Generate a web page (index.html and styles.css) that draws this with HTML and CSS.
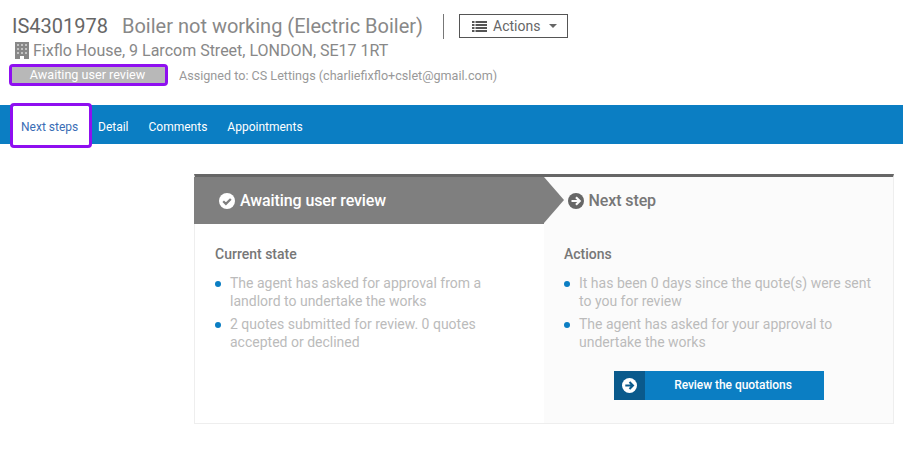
FILE: index.html
```html
<!DOCTYPE html>
<html lang="en">
<head>
    <meta charset="UTF-8">
    <title>IS4301978 Boiler not working</title>
    <link rel="stylesheet" href="styles.css">
</head>
<body>
    <div class="header">
        <div class="title-row">
            <span class="ref">IS4301978</span>
            <span class="job">Boiler not working (Electric Boiler)</span>
            <span class="divider"></span>
            <button class="actions-btn">
                <svg class="list-icon" width="15" height="12" viewBox="0 0 15 12"><path d="M0 1h2.500v2h-2.500zM3.500 1h11.500v2h-11.500zM0 4h2.500v2h-2.500zM3.500 4h11.500v2h-11.500zM0 7h2.500v2h-2.500zM3.500 7h11.500v2h-11.500zM0 10h2.500v2h-2.500zM3.500 10h11.500v2h-11.500z" fill="#555"/></svg>
                Actions
                <span class="caret"></span>
            </button>
        </div>
        <div class="address">
            <svg width="14" height="17" viewBox="0 0 14 17"><path d="M0 0h14v17h-5v-3h-4v3h-5z" fill="#888"/><path d="M2 2h2v2h-2zM6 2h2v2h-2zM10 2h2v2h-2zM2 6h2v2h-2zM6 6h2v2h-2zM10 6h2v2h-2zM2 10h2v2h-2zM6 10h2v2h-2zM10 10h2v2h-2z" fill="#c4c4c4"/></svg>
            Fixflo House, 9 Larcom Street, LONDON, SE17 1RT
        </div>
        <div class="status-row">
            <span class="status">Awaiting user review</span>
            <span class="assigned">Assigned to: CS Lettings (charliefixflo+cslet@gmail.com)</span>
        </div>
    </div>

    <div class="navbar">
        <a class="active" href="#">Next steps</a>
        <a href="#">Detail</a>
        <a href="#">Comments</a>
        <a href="#">Appointments</a>
    </div>

    <div class="card">
        <div class="col col-left">
            <div class="step-head current">
                <svg width="16" height="16" viewBox="0 0 16 16"><circle cx="8" cy="8" r="8" fill="#fff"/><path d="M4.200 8.200l2.700 2.700 4.900-4.900" fill="none" stroke="#7f7f7f" stroke-width="2.200"/></svg>
                Awaiting user review
            </div>
            <div class="col-body">
                <h3>Current state</h3>
                <ul>
                    <li>The agent has asked for approval from a landlord to undertake the works</li>
                    <li>2 quotes submitted for review. 0 quotes accepted or declined</li>
                </ul>
            </div>
        </div>
        <div class="col col-right">
            <div class="step-head next">
                <svg width="16" height="16" viewBox="0 0 16 16"><circle cx="8" cy="8" r="8" fill="#666"/><path d="M3.500 8h8M8 4.300l3.700 3.700-3.700 3.700" fill="none" stroke="#fbfbfb" stroke-width="2.200"/></svg>
                Next step
            </div>
            <div class="col-body">
                <h3>Actions</h3>
                <ul>
                    <li>It has been 0 days since the quote(s) were sent to you for review</li>
                    <li>The agent has asked for your approval to undertake the works</li>
                </ul>
                <a class="review-btn" href="#">
                    <span class="review-icon">
                        <svg width="15" height="15" viewBox="0 0 16 16"><circle cx="8" cy="8" r="8" fill="#fff"/><path d="M3.500 8h8M8 4.300l3.700 3.700-3.700 3.700" fill="none" stroke="#0a5a8c" stroke-width="2.200"/></svg>
                    </span>
                    <span class="review-text">Review the quotations</span>
                </a>
            </div>
        </div>
    </div>
</body>
</html>
```

FILE: styles.css
```css
body {
    margin: 0;
    background-color: #fff;
    font-family: Roboto, Arial, sans-serif;
    color: #777;
}
.header {
    height: 105px;
    padding: 14px 0 0 12px;
    box-sizing: border-box;
}
.title-row {
    display: flex;
    align-items: center;
    height: 24px;
    font-size: 20px;
}
.ref {
    color: #666;
}
.job {
    margin-left: 14px;
    color: #888;
}
.divider {
    width: 1px;
    height: 25px;
    margin: 0 15px 0 20px;
    background-color: #777;
}
.actions-btn {
    display: flex;
    align-items: center;
    width: 109px;
    height: 24px;
    padding: 0 0 0 12px;
    border: 1px solid #555;
    background-color: #fff;
    font-family: inherit;
    font-size: 14px;
    color: #666;
}
.list-icon {
    margin-right: 6px;
}
.caret {
    margin-left: 9px;
    border-top: 4px solid #666;
    border-left: 4px solid transparent;
    border-right: 4px solid transparent;
}
.address {
    display: flex;
    align-items: center;
    gap: 4px;
    height: 20px;
    margin: 2px 0 0 3px;
    font-size: 16px;
    color: #888;
}
.status-row {
    display: flex;
    align-items: center;
    margin-top: 7px;
}
.status {
    width: 151px;
    height: 16px;
    padding-right: 2px;
    line-height: 16px;
    background-color: #b8b8b8;
    color: #fff;
    font-size: 12.600px;
    text-align: center;
    border-radius: 1px;
    outline: 3px solid #8f0ff0;
}
.assigned {
    margin-left: 14px;
    font-size: 12.600px;
    color: #999;
}
.navbar {
    display: flex;
    height: 39px;
    padding-left: 13px;
    background-color: #0b7ec3;
}
.navbar a {
    padding: 0;
    margin-right: 20px;
    line-height: 44px;
    font-size: 12px;
    color: #fff;
    text-decoration: none;
}
.navbar .active {
    width: 60px;
    height: 39px;
    padding: 0 8px;
    margin-top: 1px;
    margin-right: 9px;
    line-height: 42px;
    background-color: #fff;
    color: #3a6db5;
    border-radius: 1px;
    outline: 3px solid #8f0ff0;
}
.card {
    display: flex;
    width: 700px;
    height: 250px;
    margin: 30px 0 0 194px;
    border-top: 3px solid #666;
    border-right: 1px solid #eee;
    border-bottom: 1px solid #eee;
    border-left: 1px solid #eee;
    box-sizing: border-box;
}
.col {
    width: 350px;
}
.col-left {
    width: 349px;
}
.col-right {
    background-color: #fbfbfb;
}
.step-head {
    display: flex;
    align-items: center;
    gap: 5px;
    height: 47px;
    font-size: 16px;
    font-weight: 500;
    letter-spacing: -0.100px;
}
.current {
    position: relative;
    padding-left: 25px;
    margin-left: -1px;
    background-color: #7f7f7f;
    color: #fff;
}
.current::after {
    content: "";
    position: absolute;
    top: 0;
    left: 100%;
    border-top: 23.500px solid transparent;
    border-bottom: 23.500px solid transparent;
    border-left: 20px solid #7f7f7f;
}
.next {
    padding-left: 24px;
    color: #777;
}
.col-body {
    padding: 22px 20px 0;
}
.col-left .col-body {
    padding-right: 30px;
}
.col-right .col-body {
    padding-left: 20.500px;
}
.col-body h3 {
    margin: 0 0 11px;
    font-size: 14px;
    line-height: 17px;
    font-weight: 500;
    color: #777;
}
.col-body ul {
    margin: 0;
    padding: 0;
    list-style: none;
}
.col-body li {
    position: relative;
    padding-left: 15px;
    margin-bottom: 5px;
    font-size: 14px;
    line-height: 18px;
    color: #bbb;
}
.col-body li::before {
    content: "";
    position: absolute;
    top: 7px;
    left: 0;
    width: 6px;
    height: 6px;
    border-radius: 50%;
    background-color: #0b7ec3;
}
.review-btn {
    display: flex;
    width: 210px;
    height: 29px;
    margin: 20px 0 0 49.500px;
    background-color: #0b7ec3;
    text-decoration: none;
}
.review-icon {
    display: flex;
    align-items: center;
    justify-content: center;
    width: 31px;
    background-color: #0a5a8c;
}
.review-text {
    flex: 1;
    padding-right: 2px;
    line-height: 29px;
    font-size: 12px;
    font-weight: 500;
    letter-spacing: -0.050px;
    text-align: center;
    color: #fff;
}
```
